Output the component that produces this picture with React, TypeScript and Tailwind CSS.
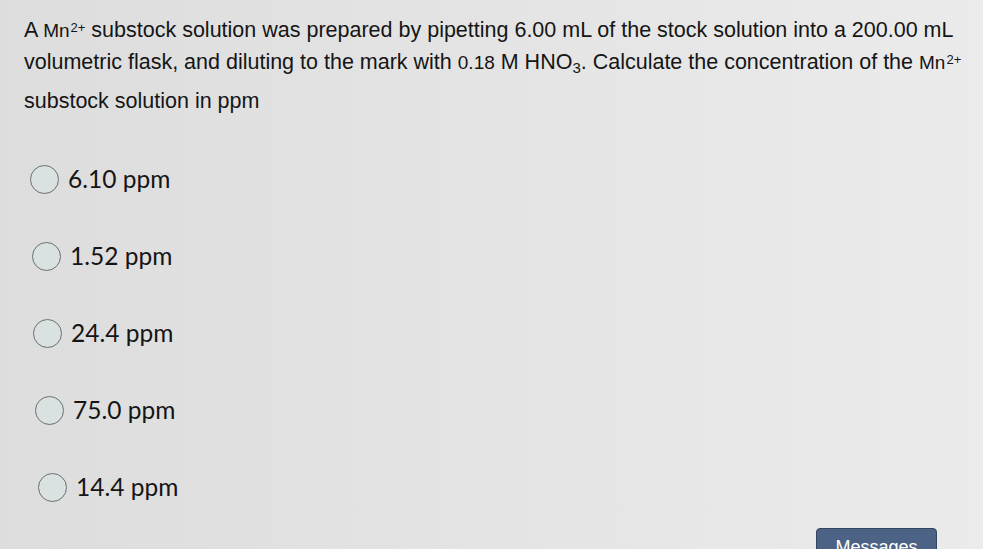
const options = [
  { label: "6.10 ppm", pad: "pl-[30px]" },
  { label: "1.52 ppm", pad: "pl-[32px]" },
  { label: "24.4 ppm", pad: "pl-[33px]" },
  { label: "75.0 ppm", pad: "pl-[35px]" },
  { label: "14.4 ppm", pad: "pl-[38px]" },
];

function Sup({ children }: { children: React.ReactNode }) {
  return <sup className="text-[13px] relative -top-[5px] ml-[1px]">{children}</sup>;
}

export default function App() {
  return (
    <div className="relative w-[983px] h-[549px] overflow-hidden bg-gradient-to-r from-[#dddddd] via-[#e4e4e4] to-[#ebebeb] text-[#151515]">
      <div className="pl-[24px] pt-[12px] font-['Liberation_Sans',Arial,sans-serif] text-[21.5px] leading-[36px] whitespace-nowrap">
        <div>
          A <span className="text-[19px]">Mn</span>
          <Sup>2+</Sup> substock solution was prepared by pipetting 6.00 mL of the stock solution into a 200.00 mL
        </div>
        <div className="-mt-[5px]">
          volumetric flask, and diluting to the mark with <span className="text-[19px]">0.18</span> M HNO
          <sub className="text-[15px]">3</sub>. Calculate the concentration of the{" "}
          <span className="text-[19px]">Mn</span>
          <Sup>2+</Sup>
        </div>
        <div className="mt-[2px]">substock solution in ppm</div>
      </div>

      <div className="mt-[46px] flex flex-col gap-[48px] font-['Lato',sans-serif] text-[24.5px]">
        {options.map((o) => (
          <label key={o.label} className={`flex items-center gap-[9px] h-[29px] ${o.pad}`}>
            <span className="w-[29px] h-[29px] rounded-full border-[1.5px] border-[#6b6f70] bg-[#d9e1e1] shrink-0" />
            <span className="leading-none">{o.label}</span>
          </label>
        ))}
      </div>

      <div className="absolute left-[816px] top-[528px] w-[121px] h-[30px] rounded-t-[4px] border border-[#34465f] bg-[#4d6385] text-white font-['Liberation_Sans',Arial,sans-serif] text-[18px] text-center pt-[5px]">
        Messages
      </div>
    </div>
  );
}
